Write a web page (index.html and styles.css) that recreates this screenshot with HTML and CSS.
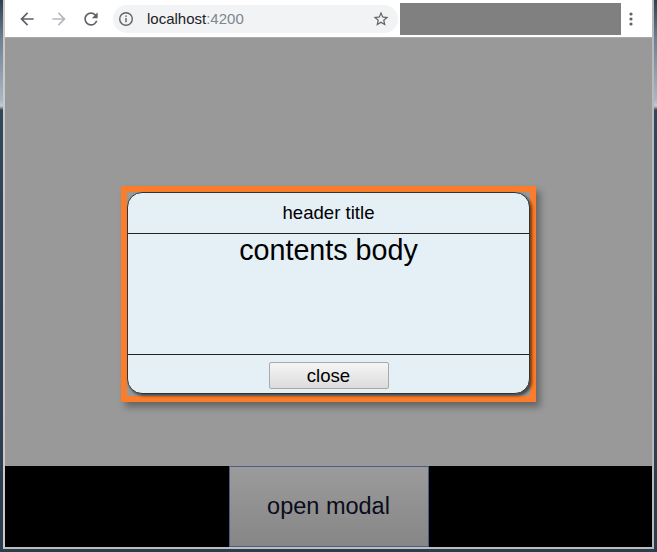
FILE: index.html
```html
<!DOCTYPE html>
<html lang="en">
<head>
    <meta charset="UTF-8">
    <meta name="viewport" content="width=device-width, initial-scale=1.0">
    <title>Modal</title>
    <link rel="stylesheet" href="styles.css">
</head>
<body>

<div class="window">
    <!-- Browser toolbar -->
    <div class="toolbar">
        <span class="nav-button">
            <svg width="20" height="20" viewBox="0 0 24 24"><path fill="#5f6368" d="M20 11H7.83l5.59-5.59L12 4l-8 8 8 8 1.41-1.41L7.83 13H20v-2z"/></svg>
        </span>
        <span class="nav-button">
            <svg width="20" height="20" viewBox="0 0 24 24"><path fill="#b5b9be" d="M12 4l-1.41 1.41L16.17 11H4v2h12.17l-5.58 5.59L12 20l8-8z"/></svg>
        </span>
        <span class="nav-button">
            <svg width="20" height="20" viewBox="0 0 24 24"><path fill="#5f6368" d="M17.65 6.35A7.958 7.958 0 0 0 12 4c-4.42 0-7.99 3.58-7.99 8s3.57 8 7.99 8c3.73 0 6.84-2.55 7.73-6h-2.08A5.99 5.99 0 0 1 12 18c-3.31 0-6-2.69-6-6s2.69-6 6-6c1.66 0 3.14.69 4.22 1.78L13 11h7V4l-2.35 2.35z"/></svg>
        </span>
        <div class="omnibox">
            <svg class="info-icon" width="16" height="16" viewBox="0 0 16 16">
                <circle cx="8" cy="8" r="6.3" fill="none" stroke="#5f6368" stroke-width="1.4"/>
                <rect x="7.3" y="7" width="1.4" height="4.3" fill="#5f6368"/>
                <rect x="7.3" y="4.5" width="1.4" height="1.4" fill="#5f6368"/>
            </svg>
            <span class="url">localhost<span class="port">:4200</span></span>
            <svg class="star-icon" width="18" height="18" viewBox="0 0 24 24"><path fill="#5f6368" d="M22 9.24l-7.19-.62L12 2 9.19 8.63 2 9.24l5.46 4.73L5.82 21 12 17.27 18.18 21l-1.63-7.03L22 9.24zM12 15.4l-3.76 2.27 1-4.28-3.32-2.88 4.38-.38L12 6.1l1.71 4.04 4.38.38-3.32 2.88 1 4.28L12 15.4z"/></svg>
        </div>
        <div class="hidden-area"></div>
        <span class="menu-button">
            <svg width="4" height="16" viewBox="0 0 4 16">
                <circle cx="2" cy="3" r="1.6" fill="#5f6368"/>
                <circle cx="2" cy="8" r="1.6" fill="#5f6368"/>
                <circle cx="2" cy="13" r="1.6" fill="#5f6368"/>
            </svg>
        </span>
    </div>

    <!-- Page -->
    <div class="overlay">
        <div class="modal-frame">
            <div class="modal">
                <div class="modal-header">header title</div>
                <div class="modal-body">contents body</div>
                <div class="modal-footer">
                    <button class="close-button">close</button>
                </div>
            </div>
        </div>
    </div>
    <div class="footer">
        <button class="open-button">open modal</button>
    </div>
</div>

</body>
</html>
```

FILE: styles.css
```css
        body {
            margin: 0;
            height: 552px;
            overflow: hidden;
            font-family: "Liberation Sans", Arial, sans-serif;
            background: linear-gradient(to bottom, #2f4050 0, #6f8192 40px, #a9b7c4 100px, #c2ccd5 106px, #33475a 110px, #2b3c4c 100%);
        }

        .window {
            width: 647px;
            height: 547px;
            margin-left: 3px;
            border-left: 2px solid #c9c9c9;
            border-right: 2px solid #b9b9b9;
            border-bottom: 2px solid #bdbdbd;
            display: flex;
            flex-direction: column;
        }

        .toolbar {
            height: 37px;
            background-color: white;
            display: flex;
            align-items: center;
            padding-left: 6px;
            box-sizing: border-box;
        }

        .nav-button {
            width: 32px;
            height: 28px;
            display: flex;
            align-items: center;
            justify-content: center;
        }

        .omnibox {
            width: 285px;
            height: 28px;
            margin-left: 6px;
            border-radius: 14px;
            background-color: #f1f3f4;
            display: flex;
            align-items: center;
            padding: 0 8px 0 5px;
            box-sizing: border-box;
        }

        .info-icon {
            flex-shrink: 0;
        }

        .url {
            margin-left: 13px;
            font-size: 15px;
            color: #202124;
            flex: 1;
        }

        .port {
            color: #80868b;
        }

        .hidden-area {
            width: 221px;
            height: 32px;
            margin-left: 2px;
            background-color: #808080;
        }

        .menu-button {
            width: 20px;
            display: flex;
            justify-content: center;
        }

        .overlay {
            height: 429px;
            background-color: #999999;
            border-top: 1px solid #ababab;
            box-sizing: border-box;
            display: flex;
            justify-content: center;
            align-items: flex-start;
            padding-top: 148px;
        }

        .modal-frame {
            width: 415px;
            border: 6px solid #fb7d2b;
            padding-bottom: 2px;
            box-sizing: border-box;
            box-shadow: 4px 5px 7px rgba(0, 0, 0, 0.35);
        }

        .modal {
            height: 202px;
            border: 1px solid #333;
            border-radius: 15px;
            background-color: #e5eff6;
            box-sizing: border-box;
            display: flex;
            flex-direction: column;
            box-shadow: 2px 2px 3px rgba(0, 0, 0, 0.55);
        }

        .modal-header {
            height: 41px;
            border-bottom: 1px solid #222;
            box-sizing: border-box;
            display: flex;
            align-items: center;
            justify-content: center;
            font-size: 18.6px;
            color: #000;
        }

        .modal-body {
            height: 121px;
            border-bottom: 1px solid #222;
            box-sizing: border-box;
            text-align: center;
            font-size: 28.7px;
            color: #000;
        }

        .modal-footer {
            flex: 1;
            display: flex;
            justify-content: center;
            align-items: flex-start;
            padding-top: 7px;
        }

        .close-button {
            width: 120px;
            height: 27px;
            padding: 0;
            font-family: "Liberation Sans", Arial, sans-serif;
            font-size: 18.6px;
            color: #000;
            background: linear-gradient(to bottom, #f5f5f5, #dcdcdc);
            border: 1px solid #a9a9a9;
            border-radius: 2px;
        }

        .footer {
            flex: 1;
            background-color: #000;
            display: flex;
            justify-content: center;
        }

        .open-button {
            width: 200px;
            height: 100%;
            padding: 0;
            font-family: "Liberation Sans", Arial, sans-serif;
            font-size: 23.5px;
            color: #0b0b1a;
            background: linear-gradient(to bottom, #9b9b9b, #868686);
            border: 1px solid #4b5d85;
        }
```
